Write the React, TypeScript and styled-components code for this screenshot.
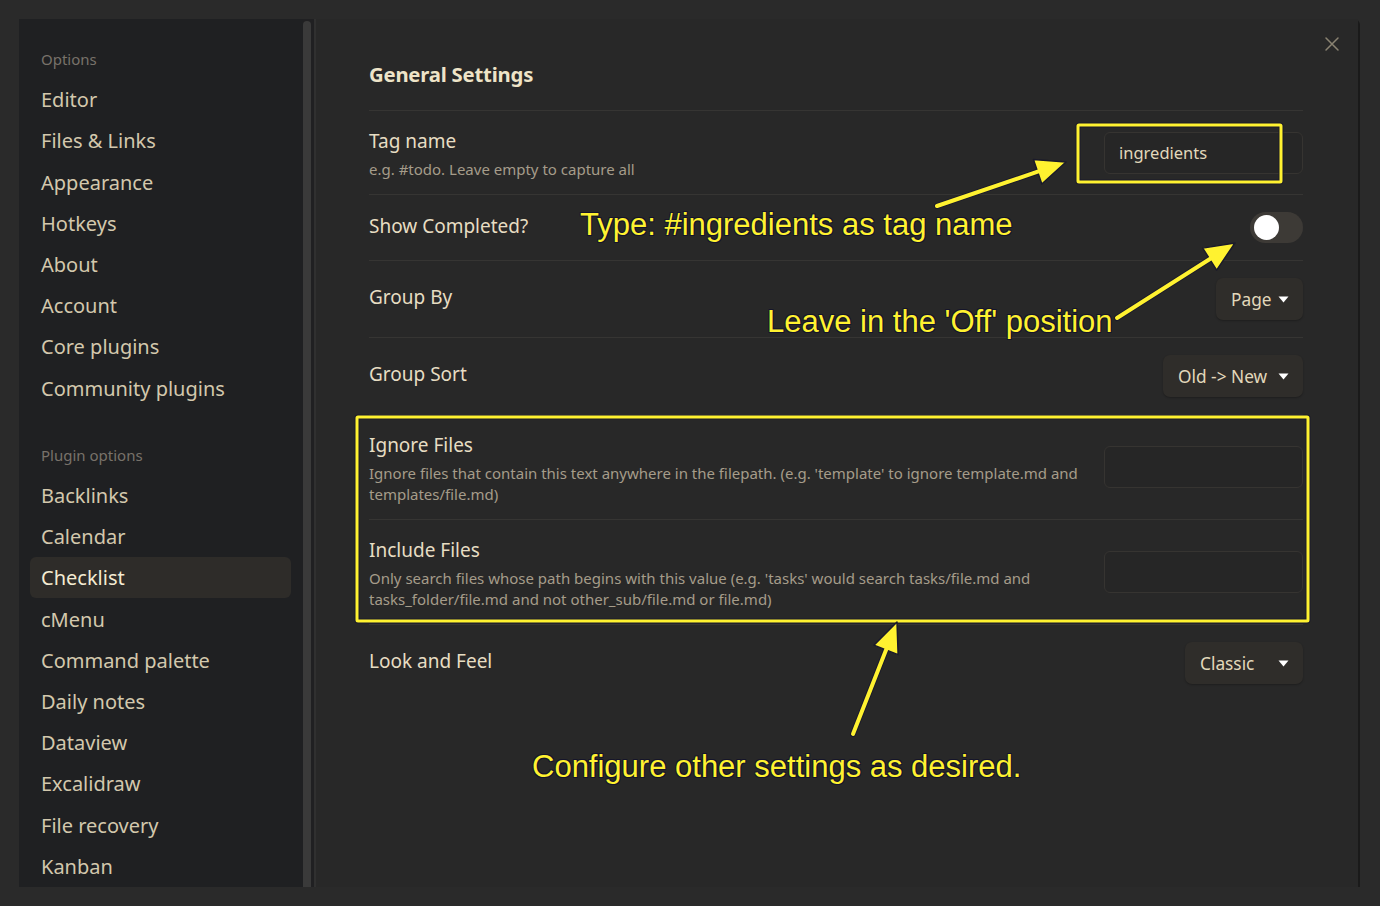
import React from "react";
import styled, { createGlobalStyle } from "styled-components";

const GlobalStyle = createGlobalStyle`
  html, body { margin: 0; padding: 0; background: #2a2a2a; }
  body { font-family: "Noto Sans", "Open Sans", sans-serif; -webkit-font-smoothing: antialiased; }
  * { box-sizing: border-box; }
`;

const Page = styled.div`
  position: relative;
  width: 1380px;
  height: 906px;
  padding: 19px 20px 19px 19px;
  background: #2a2a2a;
  overflow: hidden;
`;

const Modal = styled.div`
  display: flex;
  height: 868px;
  border-right: 2px solid #1a1a1a;
  border-top-right-radius: 6px;
`;

const Sidebar = styled.nav`
  width: 284px;
  flex: none;
  background: #1f2022;
  padding: 30px 12px 0 11px;
  display: flex;
  flex-direction: column;
`;

const NavHeader = styled.div<{ $gap?: number }>`
  height: 20px;
  line-height: 20px;
  margin-top: ${(p) => p.$gap ?? 0}px;
  margin-bottom: 10px;
  padding-left: 11px;
  font-size: 15px;
  color: #78726a;
`;

const NavItem = styled.div<{ $active?: boolean }>`
  height: 41.33px;
  display: flex;
  align-items: center;
  padding-left: 11px;
  border-radius: 6px;
  font-size: 20px;
  color: ${(p) => (p.$active ? "#f4ebd2" : "#d3c8ad")};
  background: ${(p) => (p.$active ? "#2e2c29" : "transparent")};
`;

const ScrollRail = styled.div`
  width: 13px;
  flex: none;
  background: #202022;
  border-right: 2px solid #303030;
  padding: 2px 2px 0 0;
`;

const ScrollThumb = styled.div`
  width: 8px;
  height: 100%;
  background: #3a3a3a;
  border-radius: 4px 4px 0 0;
`;

const Content = styled.main`
  position: relative;
  flex: 1;
  background: #282828;
  padding: 0 55px 0 53px;
`;

const CloseButton = styled.div`
  position: absolute;
  top: 17px;
  right: 18px;
  width: 16px;
  height: 16px;
  display: flex;
  align-items: center;
  justify-content: center;
`;

const Heading = styled.h2`
  margin: 0;
  padding: 41px 0 22px;
  line-height: 28px;
  font-size: 20.3px;
  font-weight: 700;
  color: #eee4c8;
  letter-spacing: -0.2px;
  border-bottom: 1px solid #363533;
`;

const SettingRow = styled.div<{ $first?: boolean }>`
  display: flex;
  align-items: center;
  padding: 17px 0;
  border-top: ${(p) => (p.$first ? "none" : "1px solid #363533")};
`;

const Info = styled.div<{ $single?: boolean }>`
  flex: 1 1 auto;
  padding-right: 14px;
  margin: ${(p) => (p.$single ? "0 0 4px" : "1px 0 -3px")};
`;

const Name = styled.div`
  font-size: 19px;
  line-height: 24px;
  color: #e7ddc3;
`;

const Desc = styled.div`
  margin-top: 6px;
  font-size: 15px;
  line-height: 21px;
  color: #a59c8a;
`;

const Control = styled.div`
  flex: none;
  display: flex;
  justify-content: flex-end;
`;

const TextInput = styled.div`
  width: 199px;
  height: 42px;
  padding: 0 14px;
  display: flex;
  align-items: center;
  background: #262626;
  border: 1px solid #363431;
  border-radius: 6px;
  font-size: 16.5px;
  color: #e2d8bb;
`;

const Toggle = styled.div`
  width: 53px;
  height: 31px;
  border-radius: 16px;
  background: #3d3a36;
  padding: 3px 4px;
  display: flex;
  align-items: center;
`;

const Knob = styled.div`
  width: 25px;
  height: 25px;
  border-radius: 50%;
  background: #ffffff;
`;

const Dropdown = styled.div<{ $width: number }>`
  width: ${(p) => p.$width}px;
  height: 42px;
  padding: 0 14px 0 15px;
  display: flex;
  align-items: center;
  justify-content: space-between;
  background: #2f2d2a;
  border-radius: 7px;
  box-shadow: 0 1px 2px rgba(0, 0, 0, 0.25);
  font-size: 17.3px;
  color: #e2d8bb;
`;

const Overlay = styled.svg`
  position: absolute;
  left: 0;
  top: 0;
  pointer-events: none;
`;

const Callout = styled.div<{ $x: number; $y: number; $size: number }>`
  position: absolute;
  left: ${(p) => p.$x}px;
  top: ${(p) => p.$y}px;
  font-family: "Liberation Sans", Arial, sans-serif;
  font-size: ${(p) => p.$size}px;
  line-height: 1;
  white-space: nowrap;
  color: #fff230;
  text-shadow: 1px 1px 0 #15152a, -1px -1px 0 #15152a, 1px -1px 0 #15152a, -1px 1px 0 #15152a;
`;

const Caret = () => (
  <svg width="11" height="7" viewBox="0 0 11 7">
    <path d="M0.5 0.5 H10.5 L5.5 6.5 Z" fill="#ffffff" />
  </svg>
);

const YELLOW = "#fff230";
const DARK = "#1a1a2a";

type Pt = [number, number];

const Arrow = ({ from, tip }: { from: Pt; tip: Pt }) => {
  const dx = tip[0] - from[0];
  const dy = tip[1] - from[1];
  const len = Math.hypot(dx, dy);
  const ux = dx / len;
  const uy = dy / len;
  const hl = 30;
  const hw = 13;
  const bx = tip[0] - ux * hl;
  const by = tip[1] - uy * hl;
  const px = -uy;
  const py = ux;
  const head = `${tip[0]},${tip[1]} ${bx + px * hw},${by + py * hw} ${bx - px * hw},${by - py * hw}`;
  return (
    <g>
      <line x1={from[0]} y1={from[1]} x2={bx + ux * 4} y2={by + uy * 4} stroke={DARK} strokeWidth={6} strokeLinecap="round" />
      <polygon points={head} fill={YELLOW} stroke={DARK} strokeWidth={1.5} strokeLinejoin="round" />
      <line x1={from[0]} y1={from[1]} x2={bx + ux * 4} y2={by + uy * 4} stroke={YELLOW} strokeWidth={4} strokeLinecap="round" />
    </g>
  );
};

const Box = ({ x, y, w, h }: { x: number; y: number; w: number; h: number }) => (
  <g>
    <rect x={x} y={y} width={w} height={h} fill="none" stroke={DARK} strokeWidth={5} rx={1} />
    <rect x={x} y={y} width={w} height={h} fill="none" stroke={YELLOW} strokeWidth={3} rx={1} />
  </g>
);

const optionItems = ["Editor", "Files & Links", "Appearance", "Hotkeys", "About", "Account", "Core plugins", "Community plugins"];
const pluginItems = ["Backlinks", "Calendar", "Checklist", "cMenu", "Command palette", "Daily notes", "Dataview", "Excalidraw", "File recovery", "Kanban"];

export default function App() {
  return (
    <>
      <GlobalStyle />
      <Page>
        <Modal>
          <Sidebar>
            <NavHeader>Options</NavHeader>
            {optionItems.map((item) => (
              <NavItem key={item}>{item}</NavItem>
            ))}
            <NavHeader $gap={36}>Plugin options</NavHeader>
            {pluginItems.map((item) => (
              <NavItem key={item} $active={item === "Checklist"}>
                {item}
              </NavItem>
            ))}
          </Sidebar>
          <ScrollRail>
            <ScrollThumb />
          </ScrollRail>
          <Content>
            <CloseButton>
              <svg width="16" height="16" viewBox="0 0 16 16">
                <path d="M2 2 L14 14 M14 2 L2 14" stroke="#8a8372" strokeWidth="1.5" strokeLinecap="round" />
              </svg>
            </CloseButton>
            <Heading>General Settings</Heading>
            <SettingRow $first>
              <Info>
                <Name>Tag name</Name>
                <Desc>e.g. #todo. Leave empty to capture all</Desc>
              </Info>
              <Control>
                <TextInput>ingredients</TextInput>
              </Control>
            </SettingRow>
            <SettingRow>
              <Info $single>
                <Name>Show Completed?</Name>
              </Info>
              <Control>
                <Toggle>
                  <Knob />
                </Toggle>
              </Control>
            </SettingRow>
            <SettingRow>
              <Info $single>
                <Name>Group By</Name>
              </Info>
              <Control>
                <Dropdown $width={87}>
                  Page <Caret />
                </Dropdown>
              </Control>
            </SettingRow>
            <SettingRow>
              <Info $single>
                <Name>Group Sort</Name>
              </Info>
              <Control>
                <Dropdown $width={140}>
                  Old -&gt; New <Caret />
                </Dropdown>
              </Control>
            </SettingRow>
            <SettingRow>
              <Info>
                <Name>Ignore Files</Name>
                <Desc>
                  Ignore files that contain this text anywhere in the filepath. (e.g. 'template' to ignore template.md and templates/file.md)
                </Desc>
              </Info>
              <Control>
                <TextInput />
              </Control>
            </SettingRow>
            <SettingRow>
              <Info>
                <Name>Include Files</Name>
                <Desc>
                  Only search files whose path begins with this value (e.g. 'tasks' would search tasks/file.md and tasks_folder/file.md and not other_sub/file.md or file.md)
                </Desc>
              </Info>
              <Control>
                <TextInput />
              </Control>
            </SettingRow>
            <SettingRow>
              <Info $single>
                <Name>Look and Feel</Name>
              </Info>
              <Control>
                <Dropdown $width={118}>
                  Classic <Caret />
                </Dropdown>
              </Control>
            </SettingRow>
          </Content>
        </Modal>

        <Overlay width={1380} height={906} viewBox="0 0 1380 906">
          <Box x={1078} y={125} w={203} h={57} />
          <Box x={357} y={417} w={951} h={204} />
          <Arrow from={[937, 206]} tip={[1066, 162]} />
          <Arrow from={[1117, 318]} tip={[1235, 243]} />
          <Arrow from={[853, 734]} tip={[897, 622]} />
        </Overlay>
        <Callout $x={580} $y={209} $size={31}>Type: #ingredients as tag name</Callout>
        <Callout $x={767} $y={306} $size={31}>Leave in the 'Off' position</Callout>
        <Callout $x={532} $y={751} $size={31}>Configure other settings as desired.</Callout>
      </Page>
    </>
  );
}
